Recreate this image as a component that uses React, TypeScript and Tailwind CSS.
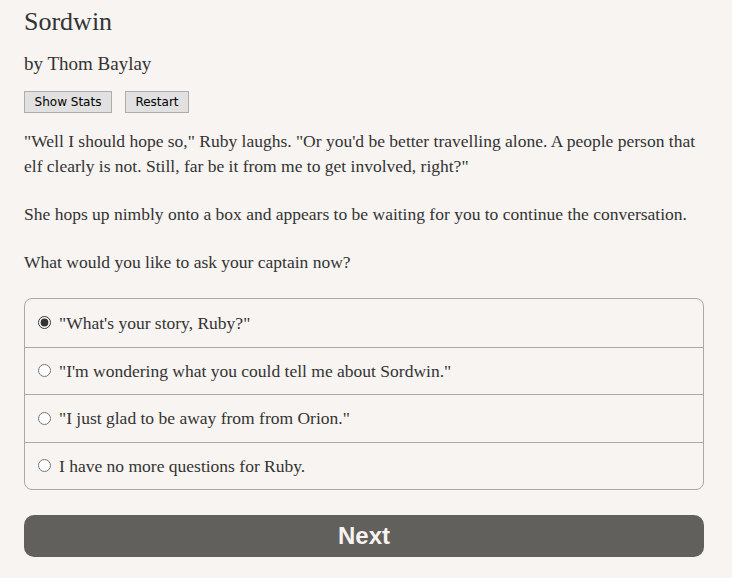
import { useState } from 'react';

const options = [
  '"What\'s your story, Ruby?"',
  '"I\'m wondering what you could tell me about Sordwin."',
  '"I just glad to be away from from Orion."',
  'I have no more questions for Ruby.',
];

const App = () => {
  const [selected, setSelected] = useState(0);

  return (
    <div className="min-h-[578px] bg-[#f7f4f1] text-[#333] font-['Liberation_Serif',serif]">
      <div className="pl-6 pr-[28px] pt-[6px]">
        <h1 className="text-[26px] leading-[32px] font-normal">Sordwin</h1>
        <h2 className="mt-[14px] text-[19px] leading-[24px] font-normal">by Thom Baylay</h2>

        <div className="mt-[15px] flex gap-[13px] font-['DejaVu_Sans',sans-serif] text-[12px] text-black">
          <button className="h-[22px] w-[88px] border border-[#adadad] bg-[#e1e1e1]">Show Stats</button>
          <button className="h-[22px] w-[64px] border border-[#adadad] bg-[#e1e1e1]">Restart</button>
        </div>

        <div className="mt-[16px] text-[17.5px] leading-[25px]">
          <p>
            "Well I should hope so," Ruby laughs. "Or you'd be better travelling alone. A people person that
            elf clearly is not. Still, far be it from me to get involved, right?"
          </p>
          <p className="mt-[23px]">
            She hops up nimbly onto a box and appears to be waiting for you to continue the conversation.
          </p>
          <p className="mt-[23px]">What would you like to ask your captain now?</p>
        </div>

        <div className="mt-[23px] rounded-[8px] border border-[#a9a9a9]">
          {options.map((opt, i) => (
            <label
              key={i}
              className={`flex h-[47.5px] cursor-pointer items-center gap-[8px] px-[13px] text-[17.5px] ${
                i > 0 ? 'border-t border-[#a9a9a9]' : ''
              }`}
            >
              <input
                type="radio"
                name="choice"
                checked={selected === i}
                onChange={() => setSelected(i)}
                className="m-0 h-[13px] w-[13px] accent-[#333]"
              />
              <span>{opt}</span>
            </label>
          ))}
        </div>

        <button className="mt-[25px] h-[42px] w-full rounded-[10px] bg-[#62605d] font-['Liberation_Sans',sans-serif] text-[24px] font-bold text-[#f7f4f1]">
          Next
        </button>
      </div>
    </div>
  );
};

export default App;
